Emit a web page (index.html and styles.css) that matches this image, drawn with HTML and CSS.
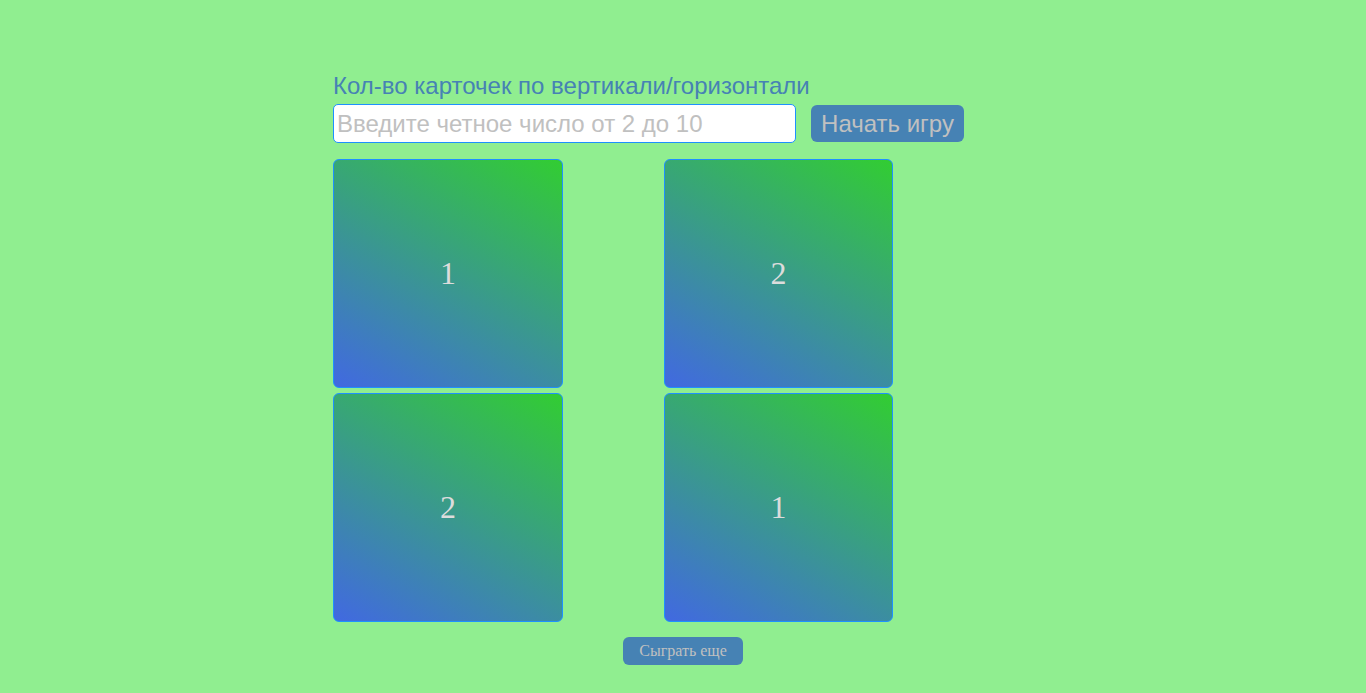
FILE: index.html
```html
<!DOCTYPE html>
<html lang="ru">
<head>
<meta charset="utf-8">
<title>Игра в пары</title>
<link rel="stylesheet" href="styles.css">
</head>
<body>
<div class="app">
  <label class="title" for="count">Кол-во карточек по вертикали/горизонтали</label>
  <div class="controls">
    <input id="count" class="count-input" type="text" placeholder="Введите четное число от 2 до 10">
    <button class="start-btn">Начать игру</button>
  </div>
  <div class="board">
    <div class="card">1</div>
    <div class="card">2</div>
    <div class="card">2</div>
    <div class="card">1</div>
  </div>
</div>
<div class="again-wrap">
  <button class="again-btn">Сыграть еще</button>
</div>
</body>
</html>
```

FILE: styles.css
```css
html, body {
  margin: 0;
  padding: 0;
}
body {
  background: #90ee90;
  min-height: 693px;
}
.app {
  width: 700px;
  margin: 0 auto;
  padding-top: 72px;
  display: flex;
  flex-direction: column;
}
.title {
  font-family: "Liberation Sans", Arial, sans-serif;
  font-size: 24px;
  line-height: 28px;
  color: #4682b4;
  margin-bottom: 4px;
}
.controls {
  display: flex;
  align-items: center;
  gap: 15px;
  margin-bottom: 16px;
}
.count-input {
  box-sizing: border-box;
  width: 463px;
  height: 39px;
  border: 1px solid #1e90ff;
  border-radius: 5px;
  padding: 0 3px;
  font-family: "Liberation Sans", Arial, sans-serif;
  font-size: 24px;
  background: #fff;
  outline: none;
}
.count-input::placeholder {
  color: #c0c0c0;
}
.start-btn {
  box-sizing: border-box;
  width: 153px;
  height: 37px;
  padding: 0;
  border: none;
  border-radius: 6px;
  background: #4682b4;
  color: #c0c0c0;
  font-family: "Liberation Sans", Arial, sans-serif;
  font-size: 24px;
}
.board {
  display: grid;
  grid-template-columns: 230px 229px;
  grid-auto-rows: 229px;
  column-gap: 101px;
  row-gap: 5px;
}
.card {
  box-sizing: border-box;
  border: 1px solid #1e90ff;
  border-radius: 6px;
  background: linear-gradient(30deg, #4169e1, #32cd32);
  display: flex;
  align-items: center;
  justify-content: center;
  font-family: "Liberation Serif", "Times New Roman", serif;
  font-size: 32px;
  color: #dcdcdc;
}
.again-wrap {
  display: flex;
  justify-content: center;
  padding-top: 15px;
}
.again-btn {
  box-sizing: border-box;
  width: 120px;
  height: 28px;
  border: none;
  border-radius: 6px;
  background: #4682b4;
  color: #c0c0c0;
  font-family: "Liberation Serif", "Times New Roman", serif;
  font-size: 16px;
}
```
